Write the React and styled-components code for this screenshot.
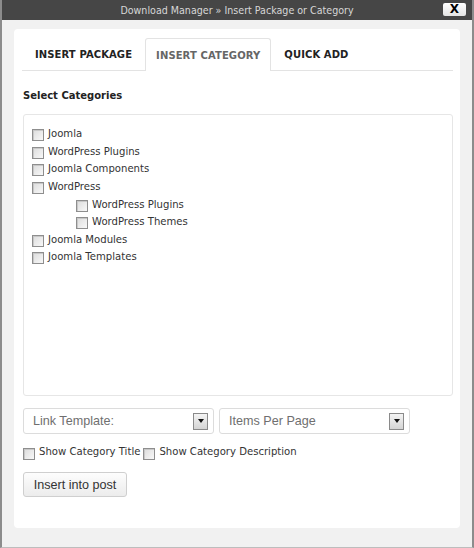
import React, { useState } from 'react';
import styled, { createGlobalStyle } from 'styled-components';

const GlobalStyle = createGlobalStyle`
  html, body {
    margin: 0;
    padding: 0;
    background: #f1f1f1;
  }
  * { box-sizing: border-box; }
`;

const Frame = styled.div`
  width: 474px;
  height: 548px;
  display: flex;
  flex-direction: column;
  background: #f1f1f1;
  border-left: 2px solid #8c8c8c;
  border-right: 2px solid #8c8c8c;
  border-bottom: 1px solid #bdbdbd;
  font-family: "DejaVu Sans", Verdana, sans-serif;
`;

const TitleBar = styled.div`
  height: 20px;
  flex: none;
  background: #464646;
  color: #d7d7d7;
  font-family: "DejaVu Sans Condensed", "DejaVu Sans", sans-serif;
  font-size: 10.6px;
  display: flex;
  align-items: center;
  justify-content: center;
  position: relative;
`;

const CloseButton = styled.button`
  position: absolute;
  right: 6px;
  top: 3px;
  width: 23px;
  height: 13px;
  padding: 0;
  border: none;
  border-radius: 2px;
  background: linear-gradient(#ffffff, #e4e4e4);
  color: #000;
  font: bold 12px "DejaVu Sans", sans-serif;
  line-height: 13px;
  cursor: pointer;
`;

const Body = styled.div`
  flex: 1;
  padding: 9px 12px 19px 12px;
  display: flex;
`;

const Panel = styled.div`
  flex: 1;
  background: #fff;
  border-radius: 4px;
  padding: 9px 7px 0 9px;
`;

const Tabs = styled.div`
  display: flex;
  border-bottom: 1px solid #e3e3e3;
  height: 33px;
  margin-left: -1px;
`;

const Tab = styled.div`
  height: ${(p) => (p.$active ? '33px' : '32px')};
  padding: 0 ${(p) => (p.$active ? '10px' : '12px')};
  display: flex;
  align-items: center;
  font-size: 10px;
  font-weight: bold;
  letter-spacing: 0.1px;
  color: ${(p) => (p.$active ? '#666' : '#222')};
  background: #fff;
  border: 1px solid ${(p) => (p.$active ? '#e3e3e3' : 'transparent')};
  border-bottom: none;
  border-radius: 3px 3px 0 0;
  margin-bottom: -1px;
  cursor: pointer;
`;

const SectionTitle = styled.div`
  font-size: 10px;
  font-weight: bold;
  color: #222;
  margin: 19px 0 0 0;
`;

const CategoryBox = styled.div`
  margin-top: 13px;
  height: 282px;
  border: 1px solid #e6e6e6;
  border-radius: 3px;
  padding: 10px 0 0 8px;
`;

const CatRow = styled.label`
  display: flex;
  align-items: center;
  height: 17.6px;
  padding-left: ${(p) => p.$level * 44}px;
  font-size: 10.1px;
  color: #333;
`;

const Box = styled.span`
  width: 12px;
  height: 12px;
  flex: none;
  margin-right: 4px;
  margin-top: ${(p) => p.$drop || 3}px;
  border: 1px solid #8e8e8e;
  background: linear-gradient(135deg, #dcdcdc, #f8f8f8);
  box-shadow: inset 1px 1px 0 #c8c8c8;
`;

const SelectRow = styled.div`
  display: flex;
  gap: 5px;
  margin-top: 12px;
`;

const Select = styled.div`
  width: 191px;
  height: 26px;
  border: 1px solid #dcdcdc;
  border-radius: 3px;
  display: flex;
  align-items: center;
  justify-content: space-between;
  padding: 0 5px 0 9px;
  font-family: "Liberation Sans", Arial, sans-serif;
  font-size: 12.6px;
  color: #6f6f6f;
`;

const Arrow = styled.span`
  width: 15px;
  height: 17px;
  border: 1px solid #8a8a8a;
  background: linear-gradient(#f4f4f4, #d4d4d4);
  display: flex;
  align-items: center;
  justify-content: center;
  &::after {
    content: '';
    border-left: 3px solid transparent;
    border-right: 3px solid transparent;
    border-top: 4px solid #111;
  }
`;

const OptionRow = styled.div`
  display: flex;
  align-items: flex-start;
  margin-top: 12px;
  font-size: 10.1px;
  color: #333;
`;

const Option = styled.label`
  display: flex;
  align-items: flex-start;
  margin-right: 3px;
`;

const InsertButton = styled.button`
  margin-top: 12px;
  height: 25px;
  width: 104px;
  padding: 0;
  border: 1px solid #cfcfcf;
  border-radius: 3px;
  background: linear-gradient(#fdfdfd, #ececec);
  font-family: "Liberation Sans", Arial, sans-serif;
  font-size: 12.6px;
  color: #333;
  cursor: pointer;
`;

const categories = [
  { name: 'Joomla', level: 0 },
  { name: 'WordPress Plugins', level: 0 },
  { name: 'Joomla Components', level: 0 },
  { name: 'WordPress', level: 0 },
  { name: 'WordPress Plugins', level: 1 },
  { name: 'WordPress Themes', level: 1 },
  { name: 'Joomla Modules', level: 0 },
  { name: 'Joomla Templates', level: 0 },
];

const tabs = ['INSERT PACKAGE', 'INSERT CATEGORY', 'QUICK ADD'];

const App = () => {
  const [active, setActive] = useState(1);

  return (
    <>
      <GlobalStyle />
      <Frame>
        <TitleBar>
          Download Manager » Insert Package or Category
          <CloseButton>X</CloseButton>
        </TitleBar>
        <Body>
          <Panel>
            <Tabs>
              {tabs.map((t, i) => (
                <Tab key={t} $active={i === active} onClick={() => setActive(i)}>
                  {t}
                </Tab>
              ))}
            </Tabs>
            <SectionTitle>Select Categories</SectionTitle>
            <CategoryBox>
              {categories.map((c, i) => (
                <CatRow key={i} $level={c.level}>
                  <Box />
                  {c.name}
                </CatRow>
              ))}
            </CategoryBox>
            <SelectRow>
              <Select>
                Link Template:
                <Arrow />
              </Select>
              <Select>
                Items Per Page
                <Arrow />
              </Select>
            </SelectRow>
            <OptionRow>
              <Option>
                <Box $drop={2} />
                Show Category Title
              </Option>
              <Option>
                <Box $drop={2} />
                Show Category Description
              </Option>
            </OptionRow>
            <InsertButton>Insert into post</InsertButton>
          </Panel>
        </Body>
      </Frame>
    </>
  );
};

export default App;
